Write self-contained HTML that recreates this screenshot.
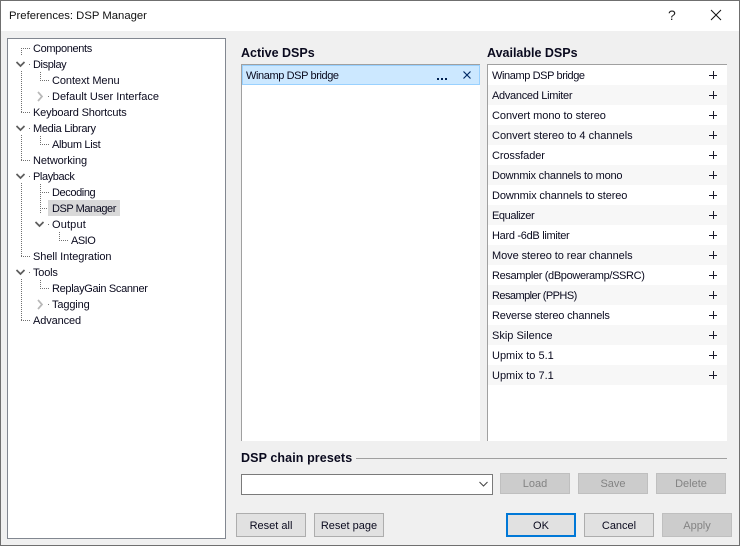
<!DOCTYPE html>
<html><head><meta charset="utf-8"><style>
html,body{margin:0;padding:0;width:740px;height:546px;overflow:hidden;background:#f0f0f0}
body{position:relative;font:11px/16px "Liberation Sans",sans-serif;color:#000}
.a{position:absolute;white-space:nowrap}
.t{position:absolute;white-space:nowrap;height:16px;line-height:16px;color:#0a0a1e;margin-top:1px}
.b{position:absolute;box-sizing:border-box;height:24px;background:#e1e1e1;border:1px solid #adadad;text-align:center;line-height:24px;color:#0a0a1e}
.d{background:#ccc;border-color:#bfbfbf;color:#838383}
.h{position:absolute;font-weight:bold;font-size:12.5px;line-height:16px;white-space:nowrap;color:#0a0a1e}
.r{position:absolute;left:488px;width:239px;height:20px;line-height:20px;white-space:nowrap;color:#0a0a1e}
.r span{position:absolute;left:4px;top:1px}
.r svg{position:absolute;left:221px;top:6px}
.s{background:#f7f7f7}
</style></head><body>
<div class="a" style="left:0;top:0;width:738px;height:544px;border:1px solid #6f6f6f"></div>
<div class="a" style="left:1px;top:1px;width:738px;height:30px;background:#fff"></div>
<div class="a" style="left:9px;top:8px;font-size:11.3px;color:#111">Preferences: DSP Manager</div>
<div class="a" style="left:668px;top:7px;font-size:14px;color:#222">?</div>
<svg class="a" style="left:710px;top:9px" width="12" height="12"><path d="M1 1L11 11M11 1L1 11" stroke="#111" fill="none"/></svg>

<div class="a" style="left:7px;top:38px;width:217px;height:499px;background:#fff;border:1px solid #828790"></div>
<div class="a" style="left:48px;top:200px;width:72px;height:16px;background:#d9d9d9"></div>
<svg class="a" style="left:0;top:0" width="130" height="340">
<g stroke="#707070" stroke-dasharray="1 1" fill="none">
<path d="M21.5 48V55M21 48.5H31M21.5 71V112M21 112.5H31M21.5 135V160M21 160.5H31M21.5 183V256M21 256.5H31M21.5 279V320M21 320.5H31"/>
<path d="M40.5 72V80M40 80.5H50M40.5 136V144M40 144.5H50M40.5 184V214M40 192.5H50M40 208.5H48M40.5 280V288M40 288.5H50M59.5 232V240M59 240.5H69"/>
<path d="M29 64.5H31M29 128.5H31M29 176.5H31M29 272.5H31M48 96.5H50M48 224.5H50M48 304.5H50"/>
</g>
<g fill="none" stroke-width="1.7">
<path d="M16.5 62L20.5 66L24.5 62M16.5 126L20.5 130L24.5 126M16.5 174L20.5 178L24.5 174M16.5 270L20.5 274L24.5 270M35.5 222L39.5 226L43.5 222" stroke="#5c5c5c"/>
<path d="M38 92L42 96.5L38 101M38 300L42 304.5L38 309" stroke="#b8b8b8"/>
</g></svg>
<div class="t" style="left:33px;top:40px;letter-spacing:-.35px">Components</div>
<div class="t" style="left:33px;top:56px;letter-spacing:-.4px">Display</div>
<div class="t" style="left:52px;top:72px;letter-spacing:-.08px">Context Menu</div>
<div class="t" style="left:52px;top:88px">Default User Interface</div>
<div class="t" style="left:33px;top:104px;letter-spacing:-.17px">Keyboard Shortcuts</div>
<div class="t" style="left:33px;top:120px;letter-spacing:-.3px">Media Library</div>
<div class="t" style="left:52px;top:136px;letter-spacing:-.3px">Album List</div>
<div class="t" style="left:33px;top:152px;letter-spacing:-.1px">Networking</div>
<div class="t" style="left:33px;top:168px;letter-spacing:-.4px">Playback</div>
<div class="t" style="left:52px;top:184px;letter-spacing:-.4px">Decoding</div>
<div class="t" style="left:52px;top:200px;letter-spacing:-.45px">DSP Manager</div>
<div class="t" style="left:52px;top:216px;letter-spacing:.15px">Output</div>
<div class="t" style="left:71px;top:232px;letter-spacing:-.5px">ASIO</div>
<div class="t" style="left:33px;top:248px;letter-spacing:-.06px">Shell Integration</div>
<div class="t" style="left:33px;top:264px;letter-spacing:-.2px">Tools</div>
<div class="t" style="left:52px;top:280px;letter-spacing:-.33px">ReplayGain Scanner</div>
<div class="t" style="left:52px;top:296px;letter-spacing:-.14px">Tagging</div>
<div class="t" style="left:33px;top:312px;letter-spacing:-.12px">Advanced</div>

<div class="h" style="left:241px;top:45px">Active DSPs</div>
<div class="h" style="left:487px;top:45px">Available DSPs</div>

<div class="a" style="left:241px;top:64px;width:238px;height:376px;background:#fff;border-left:1px solid #a0a0a0;border-top:1px solid #a0a0a0"></div>
<div class="a" style="left:242px;top:65px;width:236px;height:18px;background:#cce8ff;border:1px solid #99d1ff"></div>
<div class="t" style="left:246px;top:67px;letter-spacing:-.4px">Winamp DSP bridge</div>
<svg class="a" style="left:436px;top:70px" width="40" height="12"><path d="M1 9h2M5 9h2M9 9h2" stroke="#002050" stroke-width="2" fill="none"/><path d="M27.5 1.5L34.5 8.5M34.5 1.5L27.5 8.5" stroke="#002a66" stroke-width="1.2" fill="none"/></svg>

<div class="a" style="left:487px;top:64px;width:239px;height:376px;background:#fff;border-left:1px solid #a0a0a0;border-top:1px solid #a0a0a0"></div>
<div class="r" style="top:65px"><span style="letter-spacing:-.4px">Winamp DSP bridge</span><svg width="9" height="9"><path d="M0 4.5H8M4.5 0V8" stroke="#1a1a2a" fill="none"/></svg></div>
<div class="r s" style="top:85px"><span style="letter-spacing:-.3px">Advanced Limiter</span><svg width="9" height="9"><path d="M0 4.5H8M4.5 0V8" stroke="#1a1a2a" fill="none"/></svg></div>
<div class="r" style="top:105px"><span style="letter-spacing:-.05px">Convert mono to stereo</span><svg width="9" height="9"><path d="M0 4.5H8M4.5 0V8" stroke="#1a1a2a" fill="none"/></svg></div>
<div class="r s" style="top:125px"><span>Convert stereo to 4 channels</span><svg width="9" height="9"><path d="M0 4.5H8M4.5 0V8" stroke="#1a1a2a" fill="none"/></svg></div>
<div class="r" style="top:145px"><span style="letter-spacing:-.1px">Crossfader</span><svg width="9" height="9"><path d="M0 4.5H8M4.5 0V8" stroke="#1a1a2a" fill="none"/></svg></div>
<div class="r s" style="top:165px"><span style="letter-spacing:-.2px">Downmix channels to mono</span><svg width="9" height="9"><path d="M0 4.5H8M4.5 0V8" stroke="#1a1a2a" fill="none"/></svg></div>
<div class="r" style="top:185px"><span style="letter-spacing:-.11px">Downmix channels to stereo</span><svg width="9" height="9"><path d="M0 4.5H8M4.5 0V8" stroke="#1a1a2a" fill="none"/></svg></div>
<div class="r s" style="top:205px"><span style="letter-spacing:-.4px">Equalizer</span><svg width="9" height="9"><path d="M0 4.5H8M4.5 0V8" stroke="#1a1a2a" fill="none"/></svg></div>
<div class="r" style="top:225px"><span style="letter-spacing:-.3px">Hard -6dB limiter</span><svg width="9" height="9"><path d="M0 4.5H8M4.5 0V8" stroke="#1a1a2a" fill="none"/></svg></div>
<div class="r s" style="top:245px"><span style="letter-spacing:-.07px">Move stereo to rear channels</span><svg width="9" height="9"><path d="M0 4.5H8M4.5 0V8" stroke="#1a1a2a" fill="none"/></svg></div>
<div class="r" style="top:265px"><span style="letter-spacing:-.35px">Resampler (dBpoweramp/SSRC)</span><svg width="9" height="9"><path d="M0 4.5H8M4.5 0V8" stroke="#1a1a2a" fill="none"/></svg></div>
<div class="r s" style="top:285px"><span style="letter-spacing:-.55px">Resampler (PPHS)</span><svg width="9" height="9"><path d="M0 4.5H8M4.5 0V8" stroke="#1a1a2a" fill="none"/></svg></div>
<div class="r" style="top:305px"><span style="letter-spacing:-.17px">Reverse stereo channels</span><svg width="9" height="9"><path d="M0 4.5H8M4.5 0V8" stroke="#1a1a2a" fill="none"/></svg></div>
<div class="r s" style="top:325px"><span>Skip Silence</span><svg width="9" height="9"><path d="M0 4.5H8M4.5 0V8" stroke="#1a1a2a" fill="none"/></svg></div>
<div class="r" style="top:345px"><span>Upmix to 5.1</span><svg width="9" height="9"><path d="M0 4.5H8M4.5 0V8" stroke="#1a1a2a" fill="none"/></svg></div>
<div class="r s" style="top:365px"><span>Upmix to 7.1</span><svg width="9" height="9"><path d="M0 4.5H8M4.5 0V8" stroke="#1a1a2a" fill="none"/></svg></div>

<div class="h" style="left:241px;top:450px;letter-spacing:.1px">DSP chain presets</div>
<div class="a" style="left:356px;top:458px;width:371px;height:1px;background:#a0a0a0"></div>
<div class="a" style="left:241px;top:474px;width:250px;height:19px;background:#fff;border:1px solid #7a7a7a"></div>
<svg class="a" style="left:479px;top:481px" width="10" height="7"><path d="M0.5 1L4.5 5L8.5 1" stroke="#444" fill="none"/></svg>
<div class="b d" style="left:500px;top:473px;width:70px;height:21px;line-height:21px">Load</div>
<div class="b d" style="left:578px;top:473px;width:70px;height:21px;line-height:21px">Save</div>
<div class="b d" style="left:656px;top:473px;width:70px;height:21px;line-height:21px">Delete</div>
<div class="b" style="left:236px;top:513px;width:70px">Reset all</div>
<div class="b" style="left:314px;top:513px;width:70px">Reset page</div>
<div class="b" style="left:506px;top:513px;width:70px;border:2px solid #0078d7;line-height:22px">OK</div>
<div class="b" style="left:584px;top:513px;width:70px">Cancel</div>
<div class="b d" style="left:662px;top:513px;width:70px">Apply</div>
</body></html>
